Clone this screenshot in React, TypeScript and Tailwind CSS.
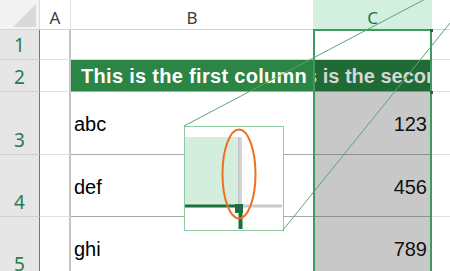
import React from 'react';

const hdrFont = "font-['Noto_Sans','Open_Sans',sans-serif]";
const cellFont = "font-['Liberation_Sans',Arial,sans-serif]";

const RowHead = ({ n, h }: { n: string; h: string }) => (
  <div
    className={`${h} w-[40px] shrink-0 bg-[#e6e6e6] border-r border-r-[#3e9566] border-b border-b-[#cfcfcf] flex items-end justify-center pb-[4px] text-[19px] leading-none text-[#2a7a52] ${hdrFont}`}
  >
    {n}
  </div>
);

const ColA = ({ h }: { h: string }) => (
  <div className={`${h} w-[31px] shrink-0 border-r-2 border-r-[#c4c4c4] border-b border-b-[#e1e1e1]`} />
);

const Rest = ({ h }: { h: string }) => <div className={`${h} flex-1 border-b border-b-[#e1e1e1]`} />;

const DataRow = ({ n, h, b, c }: { n: string; h: string; b: string; c: string }) => (
  <div className="flex">
    <RowHead n={n} h={h} />
    <ColA h={h} />
    <div className={`${h} w-[242px] shrink-0 border-b border-b-[#a9a9a9] flex items-center pl-[3px] pt-[2px] text-[20px] text-black ${cellFont}`}>
      {b}
    </div>
    <div className={`${h} w-[119px] shrink-0 bg-[#c8c8c8] border-b border-b-[#8e8e8e] flex items-center justify-end pr-[5px] pt-[2px] text-[20px] text-[#111] ${cellFont}`}>
      {c}
    </div>
    <Rest h={h} />
  </div>
);

// magnified view of the fill-handle corner
const Callout = () => (
  <div className="absolute left-[184px] top-[126px] w-[100px] h-[105px] bg-white border-[1.5px] border-[#8fc9a3]">
    <svg width="97" height="102" viewBox="0 0 97 102" className="block">
      <rect x="0" y="10" width="53" height="70" fill="#d3eedd" />
      <rect x="53" y="10" width="4" height="69" fill="#d4d4d4" />
      <rect x="53" y="10" width="1.5" height="69" fill="#c4c4c4" />
      <rect x="56" y="77.5" width="41" height="3" fill="#c9c9c9" />
      <rect x="0" y="77.5" width="52" height="3" fill="#1d6e3c" />
      <rect x="50" y="77" width="8" height="9" fill="#1d6e3c" />
      <rect x="53.5" y="85" width="4" height="17" fill="#1d6e3c" />
    </svg>
  </div>
);

export default function App() {
  return (
    <div className="relative w-[450px] h-[271px] overflow-hidden bg-white">
      {/* column headers */}
      <div className={`flex h-[30px] border-b border-b-[#d4d4d4] ${hdrFont} text-[17px] leading-none`}>
        <div className="w-[40px] shrink-0 bg-[#f3f3f3] border-r border-r-[#dadada] relative">
          <div className="absolute left-[13px] top-[4px] w-0 h-0 border-l-[23px] border-l-transparent border-b-[23px] border-b-[#d9d9d9]" />
        </div>
        <div className="w-[31px] shrink-0 border-r border-r-[#e1e1e1] flex items-center justify-center pt-[6px] text-[#3c3c3c]">A</div>
        <div className="w-[242px] shrink-0 flex items-center justify-center pt-[6px] text-[#3c3c3c]">B</div>
        <div className="w-[119px] shrink-0 bg-[#d3efdf] flex items-center justify-center pt-[6px] text-[#217346]">C</div>
        <div className="flex-1" />
      </div>

      {/* row 1 */}
      <div className="flex">
        <RowHead n="1" h="h-[30px]" />
        <ColA h="h-[30px]" />
        <div className="h-[30px] w-[242px] shrink-0 border-b border-b-[#d9d9d9]" />
        <div className="h-[30px] w-[119px] shrink-0 border-b border-b-[#d9d9d9]" />
        <Rest h="h-[30px]" />
      </div>

      {/* row 2 */}
      <div className="flex">
        <RowHead n="2" h="h-[32px]" />
        <ColA h="h-[32px]" />
        <div className={`h-[32px] w-[242px] shrink-0 bg-[#2b8544] border-b border-b-[#a9a9a9] flex items-center pl-[10px] whitespace-nowrap overflow-hidden text-[20px] font-bold tracking-[0.3px] text-white ${cellFont}`}>
          This is the first column
        </div>
        <div className={`h-[32px] w-[119px] shrink-0 bg-[#1f6a35] border-b border-b-[#8e8e8e] flex items-center whitespace-nowrap overflow-hidden text-[20px] font-bold text-[#d6d6d6] ${cellFont}`}>
          <span className="ml-[-37px]">This is the second column</span>
        </div>
        <Rest h="h-[32px]" />
      </div>

      <DataRow n="3" h="h-[63px]" b="abc" c="123" />
      <DataRow n="4" h="h-[62px]" b="def" c="456" />
      <DataRow n="5" h="h-[62px]" b="ghi" c="789" />

      {/* column C selection */}
      <div className="absolute left-[313px] top-[29px] w-[119px] h-[260px] border-2 border-[#3f9a62]" />
      <div className="absolute left-[430px] top-[29px] w-[3px] h-[3px] bg-[#1d6e3c]" />
      <div className="absolute left-[430px] top-[91px] w-[3px] h-[3px] bg-[#1d6e3c]" />

      <Callout />

      {/* zoom guide lines and highlight */}
      <svg className="absolute left-0 top-0 pointer-events-none" width="450" height="271" viewBox="0 0 450 271">
        <line x1="184" y1="126" x2="450" y2="-14" stroke="#5aa573" strokeWidth="1" />
        <line x1="283" y1="230" x2="450" y2="23" stroke="#5aa573" strokeWidth="1" />
        <ellipse cx="239" cy="174" rx="16.5" ry="44.5" fill="none" stroke="#f0701f" strokeWidth="2" />
      </svg>
    </div>
  );
}
